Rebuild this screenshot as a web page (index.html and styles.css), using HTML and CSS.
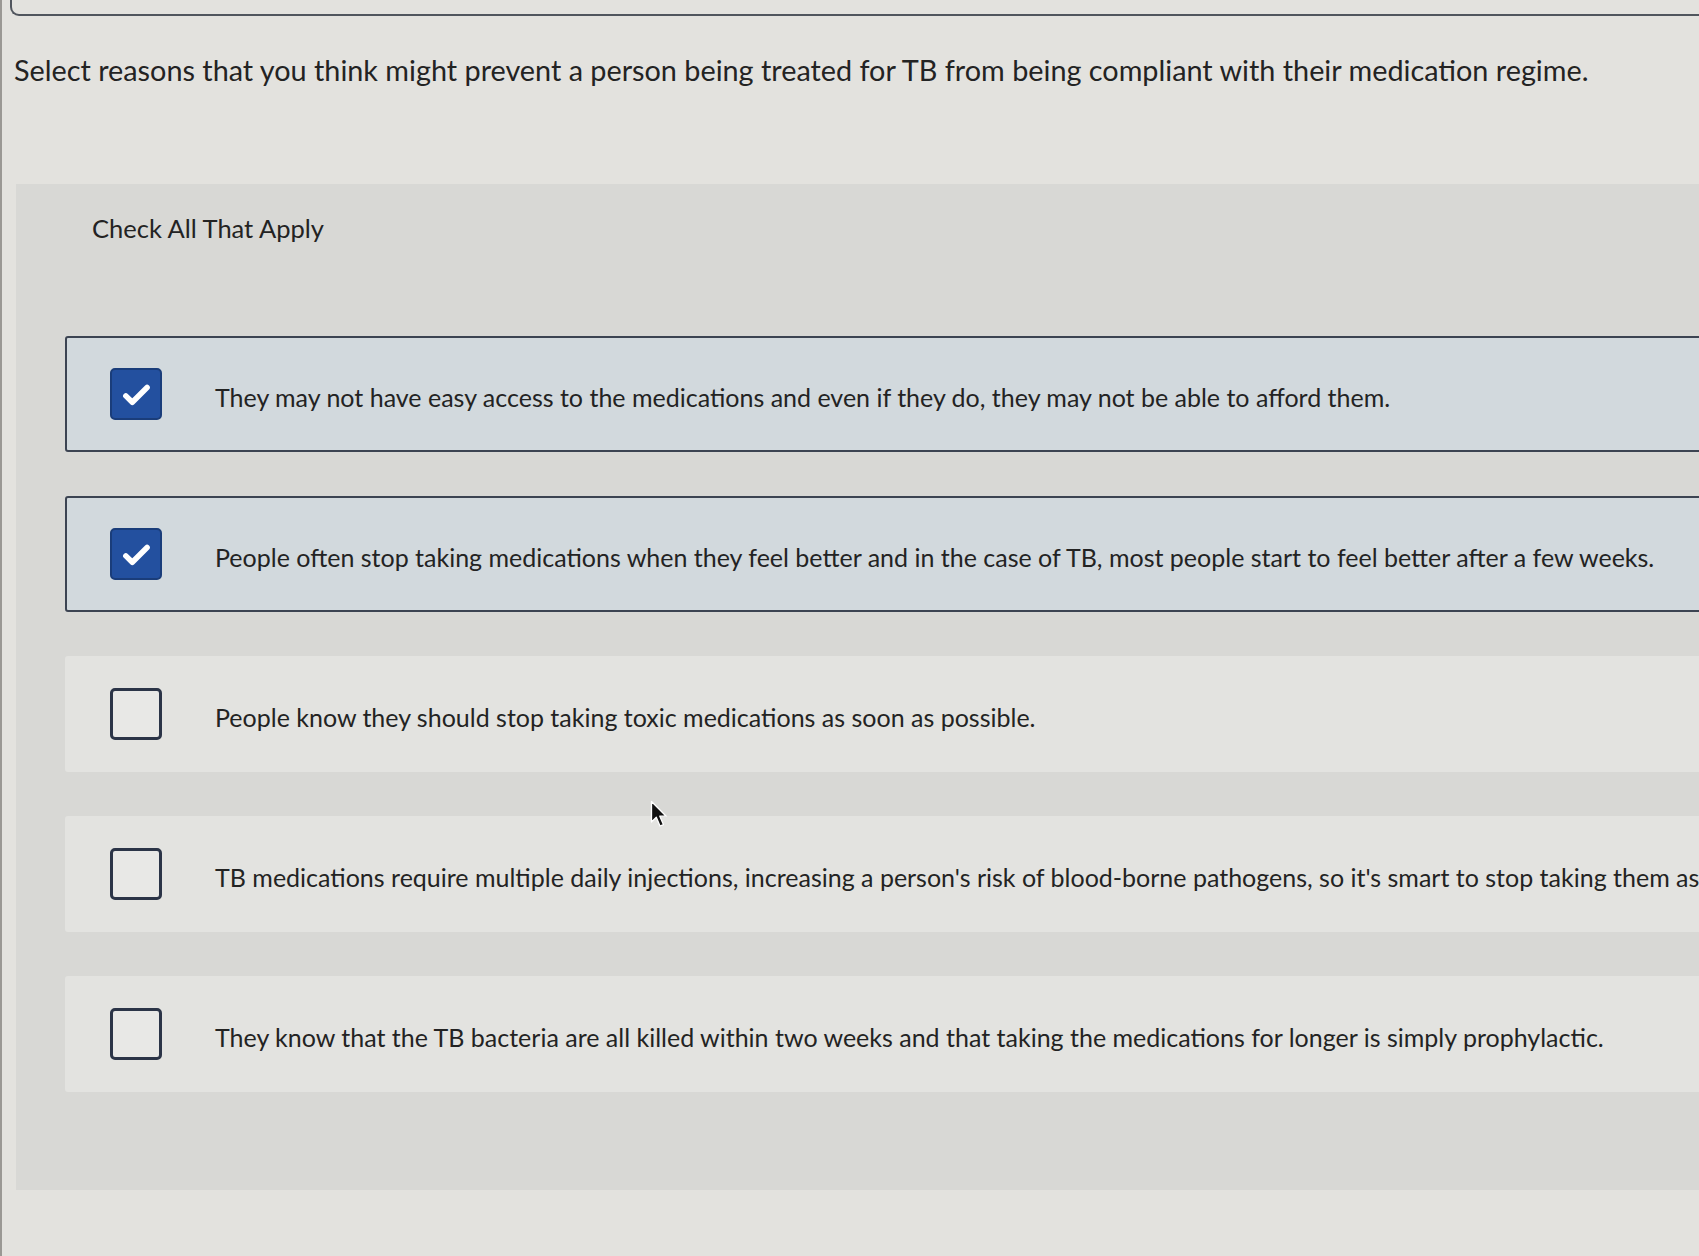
FILE: index.html
```html
<!DOCTYPE html>
<html lang="en">
<head>
<meta charset="utf-8">
<title>Check All That Apply</title>
<link rel="stylesheet" href="styles.css">
</head>
<body>
<div class="page">
  <div class="prev-box"></div>
  <p class="question">Select reasons that you think might prevent a person being treated for TB from being compliant with their medication regime.</p>
  <section class="panel">
    <div class="instructions">Check All That Apply</div>
    <div class="options">
      <label class="option selected">
        <span class="box checked"><svg viewBox="0 0 52 52" width="52" height="52"><polyline points="15,28 22,35 38,19" fill="none" stroke="#fff" stroke-width="6" stroke-linecap="round" stroke-linejoin="round"/></svg></span>
        <span class="text">They may not have easy access to the medications and even if they do, they may not be able to afford them.</span>
      </label>
      <label class="option selected">
        <span class="box checked"><svg viewBox="0 0 52 52" width="52" height="52"><polyline points="15,28 22,35 38,19" fill="none" stroke="#fff" stroke-width="6" stroke-linecap="round" stroke-linejoin="round"/></svg></span>
        <span class="text">People often stop taking medications when they feel better and in the case of TB, most people start to feel better after a few weeks.</span>
      </label>
      <label class="option">
        <span class="box"></span>
        <span class="text">People know they should stop taking toxic medications as soon as possible.</span>
      </label>
      <label class="option">
        <span class="box"></span>
        <span class="text">TB medications require multiple daily injections, increasing a person's risk of blood-borne pathogens, so it's smart to stop taking them as soon as possible.</span>
      </label>
      <label class="option">
        <span class="box"></span>
        <span class="text">They know that the TB bacteria are all killed within two weeks and that taking the medications for longer is simply prophylactic.</span>
      </label>
    </div>
  </section>
  <svg class="cursor" viewBox="0 0 18 28" width="18" height="28"><path d="M1.5 1.5 L1.5 22 L6.3 17.2 L10 26 L13.4 24.6 L9.8 16.2 L16.2 16.2 Z" fill="#111" stroke="#fff" stroke-width="1.3" stroke-linejoin="round"/></svg>
</div>
</body>
</html>
```
FILE: styles.css
```css
html, body {
  margin: 0;
  padding: 0;
}
body {
  background: #e3e2de;
  font-family: Lato, "Liberation Sans", sans-serif;
  color: #232323;
  overflow: hidden;
  width: 1699px;
  height: 1256px;
}
.page {
  position: relative;
  width: 1699px;
  height: 1256px;
  overflow: hidden;
  border-left: 2px solid #9a9894;
  box-sizing: border-box;
}
.prev-box {
  margin-left: 8px;
  height: 14px;
  width: 1800px;
  border-left: 2px solid #50555d;
  border-bottom: 2px solid #50555d;
  border-bottom-left-radius: 9px;
}
.question {
  margin: 36px 0 0 12px;
  font-size: 28.8px;
  line-height: 36px;
  white-space: nowrap;
}
.panel {
  margin: 96px 0 0 14px;
  width: 1800px;
  background: #d8d8d5;
  padding: 28px 0 98px 49px;
}
.instructions {
  margin-left: 27px;
  font-size: 25.5px;
  line-height: 32px;
}
.options {
  margin-top: 92px;
  display: flex;
  flex-direction: column;
  gap: 44px;
}
.option {
  display: flex;
  align-items: center;
  height: 116px;
  box-sizing: border-box;
  background: #e3e3e0;
  border: 2px solid transparent;
  border-radius: 3px;
  padding-left: 43px;
}
.option.selected {
  background: #d2d9dd;
  border-color: #3c4452;
}
.box {
  flex: none;
  width: 52px;
  height: 52px;
  box-sizing: border-box;
  border: 3px solid #2b3447;
  border-radius: 5px;
  background: #e8e8e6;
  display: flex;
  align-items: center;
  justify-content: center;
}
.box.checked {
  background: #23509f;
  border: 2px solid #1a3d7a;
}
.box.checked svg {
  display: block;
}
.text {
  margin-left: 53px;
  font-size: 25px;
  line-height: 30px;
  white-space: nowrap;
  padding-top: 6px;
}
.cursor {
  position: absolute;
  left: 648px;
  top: 800px;
}
```
